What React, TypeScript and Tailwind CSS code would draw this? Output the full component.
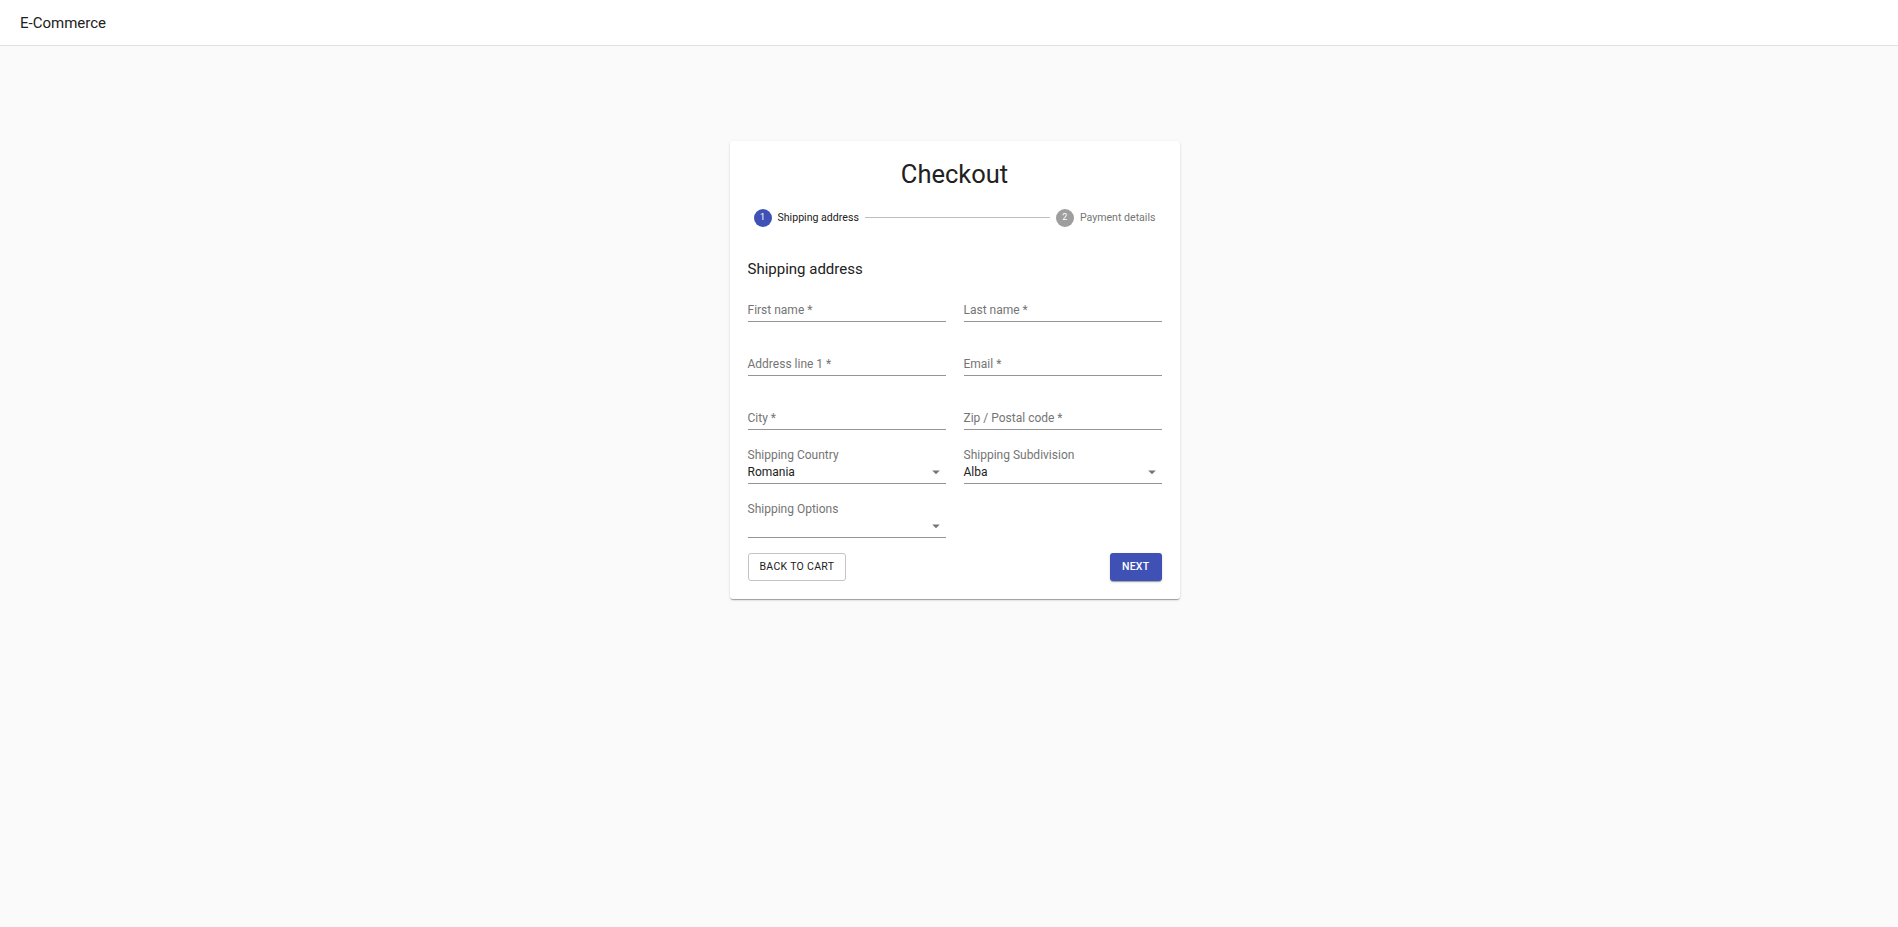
const BRAND = "#3f51b5";

const TextInput = ({ label }: { label: string }) => (
  <div className="flex h-[36px] flex-col justify-end">
    <div className="flex h-[24px] items-center border-b border-[#949494] pt-[2px]">
      <span className="text-[12px] leading-[12px] text-[#757575]">{label}</span>
    </div>
  </div>
);

const ArrowDropDown = () => (
  <svg viewBox="0 0 24 24" className="h-[18px] w-[18px] shrink-0 fill-[#757575]">
    <path d="M7 10l5 5 5-5z" />
  </svg>
);

const SelectInput = ({ label, value }: { label: string; value?: string }) => (
  <div className="flex h-[36px] flex-col">
    <span className="pt-[1px] text-[12px] leading-[12px] text-[#757575]">{label}</span>
    <div className="flex h-[23px] items-center justify-between border-b border-[#949494] pr-[1px]">
      <span className="text-[12px] leading-[14px] text-[#212121]">{value}</span>
      <ArrowDropDown />
    </div>
  </div>
);

const StepIcon = ({ n, active }: { n: number; active?: boolean }) => (
  <span
    className={
      active
        ? "flex h-[18px] w-[18px] items-center justify-center rounded-full bg-[#3f51b5] text-[9px] leading-none text-white"
        : "flex h-[18px] w-[18px] items-center justify-center rounded-full bg-[#9e9e9e] text-[9px] leading-none text-white"
    }
  >
    {n}
  </span>
);

const Stepper = () => (
  <div className="flex items-center pt-[18px] pb-[30px]">
    <div className="flex items-center gap-[6px] px-[6px]">
      <StepIcon n={1} active />
      <span className="text-[10.6px] leading-[15px] text-[#212121]">Shipping address</span>
    </div>
    <div className="h-px flex-1 bg-[#bdbdbd]" />
    <div className="flex items-center gap-[6px] px-[6px]">
      <StepIcon n={2} />
      <span className="text-[10.6px] leading-[15px] text-[#757575]">Payment details</span>
    </div>
  </div>
);

const AddressForm = () => (
  <div>
    <h2 className="mb-[5.25px] text-[15px] leading-[24px] text-[#212121]">Shipping address</h2>
    <div className="grid grid-cols-2 gap-x-[18px] gap-y-[18px]">
      <TextInput label="First name *" />
      <TextInput label="Last name *" />
      <TextInput label="Address line 1 *" />
      <TextInput label="Email *" />
      <TextInput label="City *" />
      <TextInput label="Zip / Postal code *" />
      <SelectInput label="Shipping Country" value="Romania" />
      <SelectInput label="Shipping Subdivision" value="Alba" />
      <SelectInput label="Shipping Options" />
    </div>
    <div className="mt-[15px] flex items-center justify-between">
      <button className="h-[28px] rounded-[3px] border border-[#c4c4c4] px-[11px] text-[10.5px] font-normal uppercase tracking-[0.3px] text-[#212121]">
        Back to cart
      </button>
      <button
        className="h-[28px] rounded-[3px] px-[12px] text-[10.5px] font-medium uppercase tracking-[0.3px] text-white shadow-[0_2px_1px_-1px_rgba(0,0,0,0.2),0_1px_1px_0_rgba(0,0,0,0.14),0_1px_3px_0_rgba(0,0,0,0.12)]"
        style={{ backgroundColor: BRAND }}
      >
        Next
      </button>
    </div>
  </div>
);

export default function App() {
  return (
    <div className="min-h-[927px] bg-[#fafafa] font-['Roboto',_'Liberation_Sans',_sans-serif]">
      <header className="flex h-[46px] items-center border-b border-[#e0e0e0] bg-white pl-[20px]">
        <span className="text-[15px] leading-[24px] text-[#212121]">E-Commerce</span>
      </header>

      <main className="pt-[95px] pl-[11px]">
        <div className="mx-auto w-[450px] rounded-[3px] bg-white p-[18px] shadow-[0_2px_1px_-1px_rgba(0,0,0,0.2),0_1px_1px_0_rgba(0,0,0,0.14),0_1px_3px_0_rgba(0,0,0,0.12)]">
          <h1 className="text-center text-[25.5px] leading-[31.5px] text-[#212121]">Checkout</h1>
          <Stepper />
          <AddressForm />
        </div>
      </main>
    </div>
  );
}
